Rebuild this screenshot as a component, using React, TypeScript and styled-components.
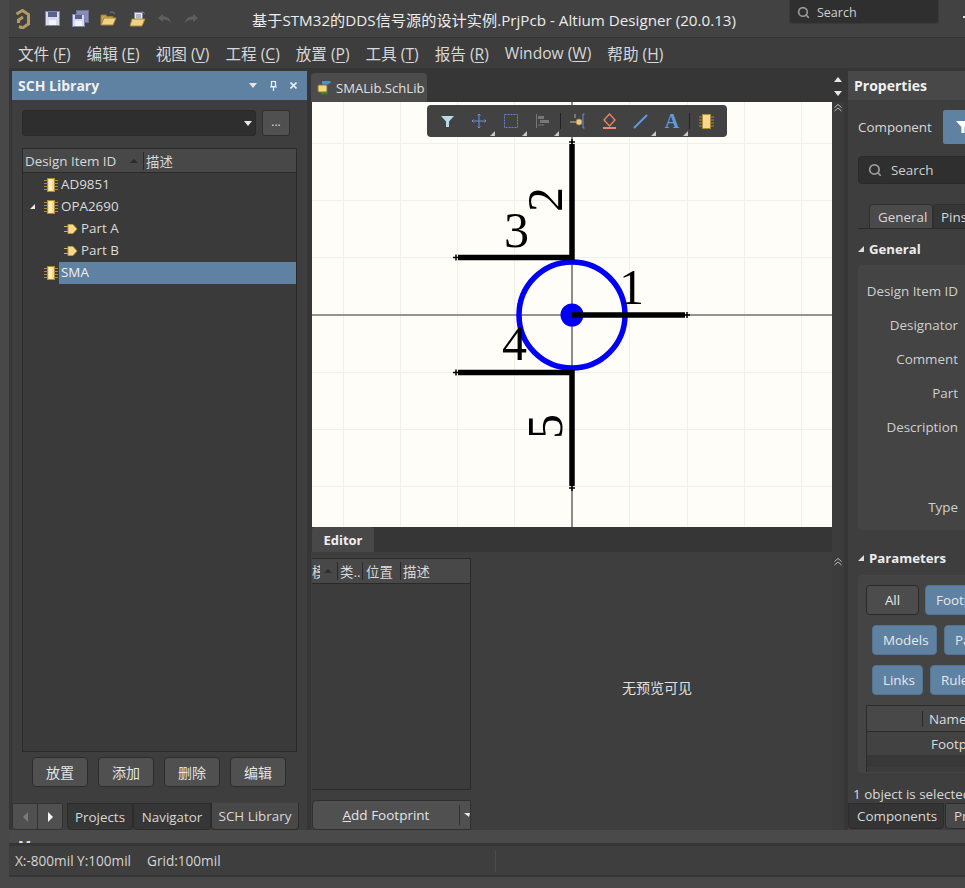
import React from 'react';
import styled, { createGlobalStyle } from 'styled-components';
import { Search } from 'lucide-react';

const GlobalStyle = createGlobalStyle`
  html, body {
    margin: 0;
    padding: 0;
    background: #484848;
    overflow: hidden;
  }
  * {
    box-sizing: border-box;
  }
`;

const UI_FONT = `"Open Sans", "Noto Sans CJK SC", sans-serif`;

const BLUE = '#5f81a2';

const Root = styled.div`
  width: 965px;
  height: 888px;
  overflow: hidden;
  display: flex;
  flex-direction: column;
  padding-left: 9px;
  background: #484848;
  color: #dcdcdc;
  font-family: ${UI_FONT};
  font-size: 13.4px;
`;

const TitleBar = styled.div`
  flex: 0 0 38px;
  display: flex;
  align-items: center;
  background: #424242;
  border-bottom: 1px solid #333;
`;

const Logo = styled.svg`
  flex: 0 0 15px;
  margin-left: 6px;
  margin-right: 15px;
`;

const QuickTools = styled.div`
  flex: 0 0 207px;
  display: flex;
  align-items: center;
  gap: 11.5px;
`;

const Title = styled.div`
  flex: 0 0 537px;
  font-size: 15.2px;
  color: #ececec;
  white-space: nowrap;
`;

const TopSearch = styled.div`
  flex: 0 0 150px;
  align-self: flex-start;
  height: 24px;
  padding: 1px 0 0 7px;
  border-radius: 0 0 4px 4px;
  background: #2f2f2f;
  border: 1px solid #3a3a3a;
  border-top: none;
  display: flex;
  align-items: center;
  gap: 7px;
  font-size: 12.5px;
  color: #cfcfcf;
`;

const WindowDash = styled.i`
  flex: 0 0 10px;
  height: 2px;
  margin: -3px 0 0 24px;
  background: #dedede;
`;

const MenuBar = styled.div`
  flex: 0 0 30px;
  display: flex;
  align-items: center;
  gap: 16px;
  padding-left: 9px;
  background: #3d3d3d;
  font-size: 15.6px;
  color: #d8d8d8;
`;

const MenuItem = styled.span`
  white-space: nowrap;
  u {
    text-underline-offset: 2px;
  }
`;

const Workspace = styled.div`
  flex: 0 0 762px;
  display: flex;
  padding: 3px 0 0 3px;
  background: #363636;
`;

const LeftPanel = styled.section`
  flex: 0 0 295px;
  display: flex;
  flex-direction: column;
  background: #3e3e3e;
`;

const PanelHeader = styled.header<{ $active?: boolean }>`
  flex: 0 0 29px;
  display: flex;
  align-items: center;
  justify-content: space-between;
  padding: 0 10px 0 6px;
  background: ${p => (p.$active ? BLUE : '#484848')};
  color: #f0f0f0;
  font-size: 14px;
  font-weight: 700;
`;

const HeaderTools = styled.div`
  display: flex;
  align-items: center;
  gap: 13px;
`;

const ComboRow = styled.div`
  display: flex;
  gap: 6px;
  padding: 10px 0 0 10px;
`;

const Combo = styled.div`
  width: 234px;
  height: 26px;
  background: #2e2e2e;
  border: 1px solid #2a2a2a;
  border-radius: 3px;
  display: flex;
  align-items: center;
  justify-content: flex-end;
  padding-right: 3px;
`;

const DotsButton = styled.div`
  width: 28px;
  height: 26px;
  background: #505050;
  border: 1px solid #2f2f2f;
  border-radius: 3px;
  display: flex;
  align-items: center;
  justify-content: center;
  font-size: 12px;
  padding-bottom: 3px;
`;

const ItemTable = styled.div`
  margin: 12px 10px 0 10px;
  height: 604px;
  width: 275px;
  background: #3a3a3a;
  border: 1px solid #2a2a2a;
`;

const TableHead = styled.div<{ $height?: number }>`
  height: ${p => p.$height ?? 24}px;
  display: flex;
  align-items: center;
  background: #484848;
  border-bottom: 1px solid #2a2a2a;
`;

const HeadCell = styled.div<{ $width?: number; $pad?: number }>`
  width: ${p => (p.$width ? `${p.$width}px` : 'auto')};
  flex: ${p => (p.$width ? '0 0 auto' : '1')};
  display: flex;
  align-items: center;
  justify-content: space-between;
  height: 18px;
  padding-left: ${p => p.$pad ?? 2}px;
  padding-right: 5px;
  overflow: hidden;
  white-space: nowrap;
  border-right: ${p => (p.$width ? '1px solid #2a2a2a' : 'none')};
  color: #d8d8d8;
`;

const ClippedHead = styled.span`
  width: 8px;
  margin-left: -2px;
  overflow: hidden;
  color: #d8d8d8;
`;

const SortUp = styled.i`
  width: 0;
  height: 0;
  border-left: 4px solid transparent;
  border-right: 4px solid transparent;
  border-bottom: 4px solid #2b2b2b;
`;

const Tree = styled.div`
  padding-top: 1px;
`;

const TreeRow = styled.div<{ $indent: number }>`
  position: relative;
  height: 22px;
  display: flex;
  align-items: center;
  padding-left: ${p => p.$indent}px;
`;

const TreeLabel = styled.span<{ $selected?: boolean }>`
  flex: 1;
  height: 22px;
  line-height: 21px;
  margin-left: 1px;
  padding-left: 2px;
  background: ${p => (p.$selected ? BLUE : 'transparent')};
  color: ${p => (p.$selected ? '#f0f0f0' : '#dcdcdc')};
`;

const Expander = styled.i`
  position: absolute;
  left: 7px;
  top: 8px;
  width: 0;
  height: 0;
  border-left: 5px solid transparent;
  border-bottom: 5px solid #e8e8e8;
`;

const ActionRow = styled.div`
  display: flex;
  gap: 10px;
  padding: 5px 0 0 20px;
`;

const ActionButton = styled.div`
  width: 56px;
  height: 30px;
  background: #505050;
  border: 1px solid #2c2c2c;
  border-radius: 4px;
  display: flex;
  align-items: center;
  justify-content: center;
  font-size: 14px;
  color: #e4e4e4;
`;

const TabStrip = styled.div`
  margin-top: 16px;
  flex: 0 0 27px;
  display: flex;
  align-items: stretch;
`;

const NavArrows = styled.div`
  width: 51px;
  display: flex;
  background: #505050;
  border: 1px solid #333;
  border-radius: 0 0 4px 4px;
  margin-right: 4px;
`;

const NavArrow = styled.div<{ $off?: boolean; $back?: boolean }>`
  flex: 1;
  display: flex;
  align-items: center;
  justify-content: center;
  & + & {
    border-left: 1px solid #333;
  }
  &::after {
    content: '';
    border-top: 5px solid transparent;
    border-bottom: 5px solid transparent;
    border-left: ${p => (p.$back ? 'none' : `5px solid ${p.$off ? '#7a7a7a' : '#f4f4f4'}`)};
    border-right: ${p => (p.$back ? `5px solid ${p.$off ? '#7a7a7a' : '#f4f4f4'}` : 'none')};
  }
`;

const BottomTab = styled.div<{ $active?: boolean; $width?: number }>`
  width: ${p => (p.$width ? `${p.$width}px` : 'auto')};
  display: flex;
  align-items: center;
  justify-content: center;
  white-space: nowrap;
  background: ${p => (p.$active ? '#484848' : '#363636')};
  border: 1px solid #2c2c2c;
  border-top: ${p => (p.$active ? 'none' : '1px solid #2c2c2c')};
  border-radius: 0 0 4px 4px;
  color: #d8d8d8;
`;

const Centre = styled.section`
  flex: 0 0 521px;
  margin-left: 4px;
  display: flex;
  flex-direction: column;
`;

const DocTabs = styled.div`
  flex: 0 0 31px;
  display: flex;
  align-items: flex-end;
`;

const DocTab = styled.div`
  width: 116px;
  height: 29px;
  background: #4c4c4c;
  border-radius: 4px 4px 0 0;
  display: flex;
  align-items: center;
  gap: 4px;
  padding-left: 6px;
  font-size: 13.1px;
  color: #e0e0e0;
`;

const Canvas = styled.div`
  position: relative;
  flex: 0 0 425px;
  margin-left: 1px;
  background: #fffdf8;
  overflow: hidden;
`;

const CanvasDrawing = styled.svg`
  display: block;
`;

const FloatBar = styled.div`
  position: absolute;
  left: 115px;
  top: 3px;
  width: 300px;
  height: 32px;
  background: #424242;
  border-radius: 4px;
  display: flex;
  align-items: center;
  padding-left: 4px;
`;

const FloatTool = styled.div<{ $corner?: boolean; $width?: number }>`
  position: relative;
  flex: 0 0 ${p => p.$width ?? 32}px;
  height: 32px;
  display: flex;
  align-items: center;
  justify-content: center;
  &::after {
    content: '';
    display: ${p => (p.$corner ? 'block' : 'none')};
    position: absolute;
    right: 0;
    bottom: 1px;
    border-left: 5px solid transparent;
    border-bottom: 5px solid #c8c8c8;
  }
`;

const FloatSep = styled.i`
  flex: 0 0 1px;
  height: 16px;
  background: #222;
  margin-left: 1px;
`;

const FloatText = styled.span`
  font-family: "Liberation Serif", serif;
  font-weight: 700;
  font-size: 20px;
  color: #5f9ae0;
  line-height: 1;
`;

const EditorTabs = styled.div`
  flex: 0 0 25px;
  display: flex;
  background: #363636;
`;

const EditorTab = styled.div`
  width: 62px;
  background: #484848;
  border-radius: 3px 3px 0 0;
  display: flex;
  align-items: center;
  justify-content: center;
  font-weight: 700;
  font-size: 13px;
  color: #f0f0f0;
  margin-left: 1px;
`;

const EditorBody = styled.div`
  flex: 1;
  display: flex;
  background: #3e3e3e;
  padding-top: 6px;
`;

const EditorLeft = styled.div`
  flex: 0 0 160px;
  display: flex;
  flex-direction: column;
  margin-left: 1px;
`;

const FootprintTable = styled.div`
  width: 159px;
  height: 232px;
  background: #3c3c3c;
  border: 1px solid #2a2a2a;
  border-left: none;
`;

const AddRow = styled.div`
  margin-top: 10px;
  height: 30px;
  width: 159px;
  display: flex;
  background: #505050;
  border: 1px solid #2f2f2f;
  border-radius: 4px 0 0 4px;
  color: #e4e4e4;
`;

const AddLabel = styled.div`
  flex: 1;
  display: flex;
  align-items: center;
  justify-content: center;
  border-right: 1px solid #2f2f2f;
  margin: 4px 0;
  font-size: 13.5px;
`;

const AddCaret = styled.div`
  flex: 0 0 10px;
  display: flex;
  align-items: center;
  justify-content: flex-end;
  &::after {
    content: '';
    border-left: 5px solid transparent;
    border-right: 1px solid transparent;
    border-top: 4px solid #e8e8e8;
  }
`;

const Preview = styled.div`
  flex: 1;
  display: flex;
  align-items: center;
  justify-content: center;
  padding: 0 0 14px 10px;
  font-size: 14px;
  color: #e0e0e0;
`;

const Gutter = styled.div`
  flex: 0 0 12px;
  display: flex;
  flex-direction: column;
  align-items: center;
  background: #3c3c3c;
`;

const ArrowStack = styled.div`
  height: 31px;
  width: 100%;
  background: #363636;
  display: flex;
  flex-direction: column;
  align-items: center;
  justify-content: center;
  gap: 9px;
  margin-bottom: 2px;
`;

const MiniChevrons = styled.svg<{ $gap?: number }>`
  display: block;
  margin-bottom: ${p => p.$gap ?? 0}px;
`;

const RightPanel = styled.section`
  margin-left: 4px;
  flex: 0 0 300px;
  display: flex;
  flex-direction: column;
  background: #3e3e3e;
`;

const ModeRow = styled.div`
  display: flex;
  align-items: center;
  height: 38px;
  padding-left: 10px;
  margin-top: 8px;
`;

const ModeLabel = styled.span`
  width: 85px;
  color: #d8d8d8;
`;

const ModeFilter = styled.div`
  width: 40px;
  height: 34px;
  background: ${BLUE};
  border-radius: 2px 0 0 2px;
  display: flex;
  align-items: center;
  justify-content: center;
`;

const PropSearch = styled.div`
  margin: 10px 0 0 10px;
  height: 28px;
  background: #2f2f2f;
  border: 1px solid #2a2a2a;
  border-radius: 4px;
  display: flex;
  align-items: center;
  gap: 9px;
  padding-left: 9px;
  color: #cfcfcf;
`;

const PropTabs = styled.div`
  margin: 20px 0 0 10px;
  height: 25px;
  display: flex;
  padding-left: 11px;
  border-bottom: 1px solid #2a2a2a;
`;

const PropTab = styled.div<{ $active?: boolean }>`
  width: ${p => (p.$active ? 64 : 60)}px;
  display: flex;
  align-items: center;
  padding-left: ${p => (p.$active ? 8 : 7)}px;
  background: ${p => (p.$active ? '#4a4a4a' : '#363636')};
  border: 1px solid #2f2f2f;
  border-bottom: none;
  border-radius: 4px 4px 0 0;
  color: #d8d8d8;
`;

const SectionTitle = styled.div<{ $top: number }>`
  margin: ${p => p.$top}px 0 0 10px;
  height: 20px;
  display: flex;
  align-items: center;
  gap: 5px;
  font-weight: 700;
  font-size: 13.2px;
  color: #ececec;
`;

const SectionCaret = styled.i`
  width: 0;
  height: 0;
  border-left: 6px solid transparent;
  border-bottom: 6px solid #dedede;
`;

const Card = styled.div`
  margin-left: 10px;
  background: #444;
  border-radius: 4px;
`;

const GeneralCard = styled(Card)`
  margin-top: 6px;
  height: 265px;
  padding-top: 9px;
`;

const FieldRow = styled.div<{ $height?: number }>`
  height: ${p => p.$height ?? 34}px;
  width: 100px;
  text-align: right;
  line-height: 34px;
  white-space: nowrap;
  color: #cfcfcf;
`;

const ParamsCard = styled(Card)`
  margin-top: 7px;
  height: 198px;
  padding: 10px 0 0 8px;
`;

const ChipRow = styled.div<{ $inset?: number; $gap?: number }>`
  display: flex;
  gap: ${p => p.$gap ?? 7}px;
  height: 30px;
  margin-bottom: 10px;
  padding-left: ${p => p.$inset ?? 0}px;
`;

const Chip = styled.div<{ $width: number; $plain?: boolean }>`
  flex: 0 0 ${p => p.$width}px;
  display: flex;
  align-items: center;
  justify-content: ${p => (p.$plain ? 'center' : 'flex-start')};
  padding-left: ${p => (p.$plain ? 0 : 10)}px;
  background: ${p => (p.$plain ? '#4c4c4c' : BLUE)};
  border: 1px solid ${p => (p.$plain ? '#2a2a2a' : '#54738f')};
  border-radius: 4px;
  color: #e8e8e8;
`;

const ParamTable = styled.div`
  margin-top: 1px;
  height: 67px;
  border: 1px solid #2a2a2a;
  border-right: none;
  border-bottom: none;
  background: #3c3c3c;
`;

const ParamHead = styled.div`
  height: 26px;
  display: flex;
  align-items: center;
  background: #484848;
  border-bottom: 1px solid #2a2a2a;
`;

const ParamHeadBlank = styled.div`
  width: 56px;
  height: 16px;
  border-right: 1px solid #2a2a2a;
`;

const ParamHeadName = styled.div`
  padding-left: 6px;
`;

const ParamRow = styled.div`
  height: 23px;
  display: flex;
  align-items: center;
  padding-left: 64px;
  background: #424242;
`;

const ParamStripe = styled.div`
  height: 12px;
  background: #383838;
`;

const SelectedNote = styled.div`
  margin-top: 12px;
  padding-left: 5px;
  height: 18px;
  white-space: nowrap;
  color: #d8d8d8;
`;

const RightTabs = styled.div`
  height: 26px;
  display: flex;
`;

const RightTab = styled.div<{ $active?: boolean; $width: number }>`
  flex: 0 0 ${p => p.$width}px;
  display: flex;
  align-items: center;
  padding-left: 8px;
  background: ${p => (p.$active ? '#343434' : '#484848')};
  border: 1px solid #2c2c2c;
  border-radius: 0 0 4px 4px;
  margin-right: 1px;
  color: #d8d8d8;
`;

const LowerStripe = styled.div`
  flex: 0 0 13px;
  background: #4a4a4a;
  overflow: hidden;
  padding: 8px 0 0 9px;
  font-weight: 700;
  line-height: 16px;
  color: #e0e0e0;
  font-size: 14px;
`;

const StatusBar = styled.footer`
  flex: 0 0 34px;
  display: flex;
  align-items: center;
  background: #3e3e3e;
  border-top: 3px solid #363636;
  border-bottom: 2px solid #363636;
  color: #d4d4d4;
  font-size: 13.6px;
  white-space: nowrap;
`;

const StatusText = styled.span`
  padding-left: 6px;
  width: 487px;
  height: 22px;
  line-height: 22px;
  border-right: 1px solid #4c4c4c;
`;

const StatusGrid = styled.span`
  margin-left: 16px;
`;

const PinNumber = styled.text`
  font-family: "Liberation Serif", serif;
  font-size: 50px;
  fill: #000;
`;

const ChipIcon = ({ size = 14 }: { size?: number }) => (
  <svg width={size} height={size} viewBox="0 0 14 14">
    <path d="M0 2.5h14M0 5.5h14M0 8.5h14M0 11.5h14" stroke="#a98a3c" strokeWidth="1" />
    <rect x="3.5" y="0.5" width="7" height="13" fill="#f6d98c" stroke="#b08a36" />
    <rect x="5" y="1.5" width="3" height="11" fill="#fff0c4" />
  </svg>
);

const GateIcon = () => (
  <svg width="14" height="12" viewBox="0 0 14 12">
    <path d="M0 3.5h4M0 8.5h4" stroke="#c9b06a" />
    <path d="M4 1.5h5l4 4.5-4 4.5H4z" fill="#f6d98c" stroke="#b99a48" />
  </svg>
);

const SaveIcon = () => (
  <svg width="15" height="15" viewBox="0 0 15 15">
    <rect x="0.5" y="0.5" width="14" height="14" fill="#d8daf0" stroke="#7f82b8" />
    <rect x="3" y="1" width="9" height="5" fill="#5c6090" />
    <rect x="4" y="9" width="7" height="5" fill="#f4f4f8" />
  </svg>
);

const SaveAllIcon = () => (
  <svg width="17" height="17" viewBox="0 0 17 17">
    <rect x="4.5" y="0.5" width="12" height="12" fill="#8a8cb0" stroke="#6c6f9e" />
    <rect x="0.5" y="4.5" width="12" height="12" fill="#d8daf0" stroke="#7f82b8" />
    <rect x="3" y="5" width="7" height="4" fill="#5c6090" />
    <rect x="3" y="11" width="7" height="5" fill="#f4f4f8" />
  </svg>
);

const OpenIcon = () => (
  <svg width="17" height="15" viewBox="0 0 17 15">
    <path d="M1 14V4h5l1 1.5h6V8" fill="#c9a552" stroke="#9a7c36" />
    <path d="M1 14l3-7h12l-3 7z" fill="#f2d386" stroke="#a68738" />
    <path d="M10 1.5c2-1 4-.5 4.5 1.5" fill="none" stroke="#6d87a8" />
  </svg>
);

const OpenDocIcon = () => (
  <svg width="17" height="16" viewBox="0 0 17 16">
    <rect x="5.5" y="1.5" width="8" height="9" fill="#e8e8ee" stroke="#8a8ca6" />
    <path d="M7 4h5M7 6h5" stroke="#7f82a0" />
    <path d="M1 15l2-7h13l-3 7z" fill="#f2d386" stroke="#a68738" />
    <path d="M12 1c2-.5 3 .5 3.5 2" fill="none" stroke="#6d87a8" />
  </svg>
);

const UndoIcon = ({ flip }: { flip?: boolean }) => (
  <svg width="15" height="12" viewBox="0 0 15 12" style={flip ? { transform: 'scaleX(-1)' } : undefined}>
    <path d="M1 5l5-4v2.5c5 0 7.500 2.500 8 7-1.500-3-4-4-8-4V9z" fill="#5f5f5f" />
  </svg>
);

const SmallCaret = () => (
  <svg width="8" height="5" viewBox="0 0 8 5">
    <path d="M0 0h8L4 5z" fill="#e6e6e6" />
  </svg>
);

const SmallCaretUp = () => (
  <svg width="8" height="5" viewBox="0 0 8 5">
    <path d="M0 5h8L4 0z" fill="#e6e6e6" />
  </svg>
);

const Pin = () => (
  <svg width="7" height="10" viewBox="0 0 7 10">
    <path d="M1.500.5h4v5h-4zM0 6h7M3.500 6v4" fill="none" stroke="#eee" strokeWidth="1.200" />
  </svg>
);

const CloseX = () => (
  <svg width="7" height="7" viewBox="0 0 7 7">
    <path d="M.5.5l6 6M6.500.5l-6 6" stroke="#eee" strokeWidth="1.600" />
  </svg>
);

const Funnel = ({ color, size = 13 }: { color: string; size?: number }) => (
  <svg width={size} height={size} viewBox="0 0 13 13">
    <path d="M0 1h13L8 6.500V12H5V6.500z" fill={color} />
  </svg>
);

const Chevrons = ({ gap }: { gap?: number }) => (
  <MiniChevrons $gap={gap} width="8" height="8" viewBox="0 0 8 8">
    <path d="M.5 3.500L4 .5l3.500 3M.5 7L4 4l3.500 3" fill="none" stroke="#b8b8b8" />
  </MiniChevrons>
);

const DocIcon = () => (
  <svg width="15" height="16" viewBox="0 0 15 16">
    <path d="M3 12l2 3 3-1 2 1 1-3z" fill="#3c7a34" />
    <rect x="1" y="5" width="9" height="7" rx="1" fill="#f2d97c" stroke="#8a7430" />
    <path d="M5 1h8l1 1.500-3 2H5z" fill="#4f8fd0" />
  </svg>
);

const FloatIcon = ({ kind }: { kind: string }) => {
  if (kind === 'filter') return <Funnel color="#b9dbe6" />;
  if (kind === 'cross')
    return (
      <svg width="14" height="14" viewBox="0 0 14 14">
        <path d="M7 0v14M0 7h14M5.500 1.500L7 0l1.500 1.500M5.500 12.500L7 14l1.500-1.500M1.500 5.500L0 7l1.500 1.500M12.500 5.500L14 7l-1.500 1.500" fill="none" stroke="#6d8fd8" />
      </svg>
    );
  if (kind === 'select')
    return (
      <svg width="14" height="14" viewBox="0 0 14 14">
        <rect x="0.5" y="0.5" width="13" height="13" fill="none" stroke="#6d7fd8" strokeDasharray="2 1" />
      </svg>
    );
  if (kind === 'align')
    return (
      <svg width="14" height="14" viewBox="0 0 14 14">
        <path d="M.5 0v14" stroke="#777" />
        <rect x="2" y="2" width="6" height="3" fill="#777" />
        <rect x="4" y="6" width="9" height="3" fill="#777" />
        <path d="M2 11h6" stroke="#777" />
      </svg>
    );
  if (kind === 'pin')
    return (
      <svg width="15" height="16" viewBox="0 0 15 16">
        <path d="M0 9h6" stroke="#d8c080" />
        <circle cx="9" cy="9" r="3" fill="#e8cc8a" stroke="#a88a4a" />
        <path d="M14.500 1H13v14h1.500" fill="none" stroke="#6d8fd8" />
        <path d="M5 1v4" stroke="#aaa" />
      </svg>
    );
  if (kind === 'diamond')
    return (
      <svg width="15" height="16" viewBox="0 0 15 16">
        <path d="M7.500 1L13 7l-5.500 6L2 7z" fill="none" stroke="#e8896a" strokeWidth="1.300" />
        <path d="M1 15h13" stroke="#e8896a" strokeWidth="2" />
      </svg>
    );
  if (kind === 'line')
    return (
      <svg width="15" height="15" viewBox="0 0 15 15">
        <path d="M1 14L14 1" stroke="#5f9ae0" strokeWidth="2" />
      </svg>
    );
  if (kind === 'chip')
    return (
      <svg width="15" height="15" viewBox="0 0 15 15">
        <path d="M0 3h15M0 6h15M0 9h15M0 12h15" stroke="#a98a3c" />
        <rect x="3.500" y="0.500" width="8" height="14" fill="#f6d98c" stroke="#b08a36" />
      </svg>
    );
  return null;
};

const MENUS: [string, string][] = [
  ['文件', 'F'],
  ['编辑', 'E'],
  ['视图', 'V'],
  ['工程', 'C'],
  ['放置', 'P'],
  ['工具', 'T'],
  ['报告', 'R'],
  ['Window', 'W'],
  ['帮助', 'H'],
];

const GRID_X = [31, 88, 145, 202, 260, 317, 375, 432, 489];
const GRID_Y = [41, 98, 155, 270, 327, 384];

const PinEnd = ({ x, y, vertical }: { x: number; y: number; vertical?: boolean }) => (
  <path
    d={vertical ? `M${x - 3} ${y}h6M${x} ${y - 3}v6` : `M${x} ${y - 3}v6M${x - 3} ${y}h6`}
    stroke="#000"
    strokeWidth="1.500"
  />
);

const Schematic = () => (
  <CanvasDrawing width="520" height="425" viewBox="0 0 520 425">
    {GRID_X.map(x => (
      <path key={x} d={`M${x + 0.5} 0V425`} stroke="#f0efe9" />
    ))}
    {GRID_Y.map(y => (
      <path key={y} d={`M0 ${y + 0.5}H520`} stroke="#f0efe9" />
    ))}
    <path d="M0 213H520M260 0V425" stroke="#727272" strokeWidth="1.600" />
    <circle cx="260" cy="213" r="53" fill="none" stroke="#0000f5" strokeWidth="5.500" />
    <circle cx="260" cy="213" r="11.500" fill="#0000f5" />
    <path d="M260 42V155.500H146M260 213H373M146 270.500H260V384" fill="none" stroke="#000" strokeWidth="5.500" />
    <PinEnd x={260} y={40} vertical />
    <PinEnd x={260} y={386} vertical />
    <PinEnd x={144} y={155.5} />
    <PinEnd x={144} y={270.5} />
    <PinEnd x={375} y={213} />
    <PinNumber x="307" y="202">1</PinNumber>
    <PinNumber x="192" y="145">3</PinNumber>
    <PinNumber x="190" y="258">4</PinNumber>
    <PinNumber transform="translate(250 110) rotate(-90)">2</PinNumber>
    <PinNumber transform="translate(250 337) rotate(-90)">5</PinNumber>
  </CanvasDrawing>
);

const App = () => (
  <Root>
    <GlobalStyle />
    <TitleBar>
      <Logo width="15" height="20" viewBox="0 0 15 20">
        <path d="M4 17.500l3.500 1.500 6-4V5.500L7.500 1.500 1.500 5M8 8l-4.500 3v3" fill="none" stroke="#b39a62" strokeWidth="3" />
      </Logo>
      <QuickTools>
        <SaveIcon />
        <SaveAllIcon />
        <OpenIcon />
        <OpenDocIcon />
        <UndoIcon />
        <UndoIcon flip />
      </QuickTools>
      <Title>基于STM32的DDS信号源的设计实例.PrjPcb - Altium Designer (20.0.13)</Title>
      <TopSearch>
        <Search size={13} color="#9a9a9a" strokeWidth={3} />
        Search
      </TopSearch>
      <WindowDash />
    </TitleBar>

    <MenuBar>
      {MENUS.map(([name, key]) => (
        <MenuItem key={key}>
          {name} (<u>{key}</u>)
        </MenuItem>
      ))}
    </MenuBar>

    <Workspace>
      <LeftPanel>
        <PanelHeader $active>
          SCH Library
          <HeaderTools>
            <SmallCaret />
            <Pin />
            <CloseX />
          </HeaderTools>
        </PanelHeader>
        <ComboRow>
          <Combo>
            <SmallCaret />
          </Combo>
          <DotsButton>...</DotsButton>
        </ComboRow>
        <ItemTable>
          <TableHead>
            <HeadCell $width={121}>
              Design Item ID
              <SortUp />
            </HeadCell>
            <HeadCell>描述</HeadCell>
          </TableHead>
          <Tree>
            <TreeRow $indent={21}>
              <ChipIcon />
              <TreeLabel>AD9851</TreeLabel>
            </TreeRow>
            <TreeRow $indent={21}>
              <Expander />
              <ChipIcon />
              <TreeLabel>OPA2690</TreeLabel>
            </TreeRow>
            <TreeRow $indent={41}>
              <GateIcon />
              <TreeLabel>Part A</TreeLabel>
            </TreeRow>
            <TreeRow $indent={41}>
              <GateIcon />
              <TreeLabel>Part B</TreeLabel>
            </TreeRow>
            <TreeRow $indent={21}>
              <ChipIcon />
              <TreeLabel $selected>SMA</TreeLabel>
            </TreeRow>
          </Tree>
        </ItemTable>
        <ActionRow>
          <ActionButton>放置</ActionButton>
          <ActionButton>添加</ActionButton>
          <ActionButton>删除</ActionButton>
          <ActionButton>编辑</ActionButton>
        </ActionRow>
        <TabStrip>
          <NavArrows>
            <NavArrow $off $back />
            <NavArrow />
          </NavArrows>
          <BottomTab $width={66}>Projects</BottomTab>
          <BottomTab $width={78}>Navigator</BottomTab>
          <BottomTab $active $width={88}>SCH Library</BottomTab>
        </TabStrip>
      </LeftPanel>

      <Centre>
        <DocTabs>
          <DocTab>
            <DocIcon />
            SMALib.SchLib
          </DocTab>
        </DocTabs>
        <Canvas>
          <Schematic />
          <FloatBar>
            <FloatTool><FloatIcon kind="filter" /></FloatTool>
            <FloatTool $corner><FloatIcon kind="cross" /></FloatTool>
            <FloatTool $corner><FloatIcon kind="select" /></FloatTool>
            <FloatTool $corner><FloatIcon kind="align" /></FloatTool>
            <FloatSep />
            <FloatTool><FloatIcon kind="pin" /></FloatTool>
            <FloatTool><FloatIcon kind="diamond" /></FloatTool>
            <FloatTool $corner $width={31}><FloatIcon kind="line" /></FloatTool>
            <FloatTool $corner><FloatText>A</FloatText></FloatTool>
            <FloatSep />
            <FloatTool><FloatIcon kind="chip" /></FloatTool>
          </FloatBar>
        </Canvas>
        <EditorTabs>
          <EditorTab>Editor</EditorTab>
        </EditorTabs>
        <EditorBody>
          <EditorLeft>
            <FootprintTable>
              <TableHead $height={25}>
                <HeadCell $width={26}>
                  <ClippedHead>模</ClippedHead>
                  <SortUp />
                </HeadCell>
                <HeadCell $width={25}>类..</HeadCell>
                <HeadCell $width={38} $pad={3}>位置</HeadCell>
                <HeadCell>描述</HeadCell>
              </TableHead>
            </FootprintTable>
            <AddRow>
              <AddLabel>
                <span>
                  <u>A</u>dd Footprint
                </span>
              </AddLabel>
              <AddCaret />
            </AddRow>
          </EditorLeft>
          <Preview>无预览可见</Preview>
        </EditorBody>
      </Centre>

      <Gutter>
        <ArrowStack>
          <SmallCaretUp />
          <SmallCaret />
        </ArrowStack>
        <Chevrons gap={446} />
        <Chevrons />
      </Gutter>

      <RightPanel>
        <PanelHeader>Properties</PanelHeader>
        <ModeRow>
          <ModeLabel>Component</ModeLabel>
          <ModeFilter>
            <Funnel color="#fff" size={14} />
          </ModeFilter>
        </ModeRow>
        <PropSearch>
          <Search size={14} color="#9a9a9a" strokeWidth={3} />
          Search
        </PropSearch>
        <PropTabs>
          <PropTab $active>General</PropTab>
          <PropTab>Pins</PropTab>
        </PropTabs>
        <SectionTitle $top={10}>
          <SectionCaret />
          General
        </SectionTitle>
        <GeneralCard>
          <FieldRow>Design Item ID</FieldRow>
          <FieldRow>Designator</FieldRow>
          <FieldRow>Comment</FieldRow>
          <FieldRow>Part</FieldRow>
          <FieldRow $height={80}>Description</FieldRow>
          <FieldRow>Type</FieldRow>
        </GeneralCard>
        <SectionTitle $top={18}>
          <SectionCaret />
          Parameters
        </SectionTitle>
        <ParamsCard>
          <ChipRow $gap={6}>
            <Chip $plain $width={53}>All</Chip>
            <Chip $width={90}>Footprints</Chip>
          </ChipRow>
          <ChipRow $inset={6}>
            <Chip $width={65}>Models</Chip>
            <Chip $width={70}>Parts</Chip>
          </ChipRow>
          <ChipRow $inset={6}>
            <Chip $width={51}>Links</Chip>
            <Chip $width={70}>Rules</Chip>
          </ChipRow>
          <ParamTable>
            <ParamHead>
              <ParamHeadBlank />
              <ParamHeadName>Name</ParamHeadName>
            </ParamHead>
            <ParamRow>Footprint</ParamRow>
            <ParamStripe />
          </ParamTable>
        </ParamsCard>
        <SelectedNote>1 object is selected</SelectedNote>
        <RightTabs>
          <RightTab $active $width={96}>Components</RightTab>
          <RightTab $width={100}>Properties</RightTab>
        </RightTabs>
      </RightPanel>
    </Workspace>

    <LowerStripe>M</LowerStripe>

    <StatusBar>
      <StatusText>
        X:-800mil Y:100mil
        <StatusGrid>Grid:100mil</StatusGrid>
      </StatusText>
    </StatusBar>
  </Root>
);

export default App;
